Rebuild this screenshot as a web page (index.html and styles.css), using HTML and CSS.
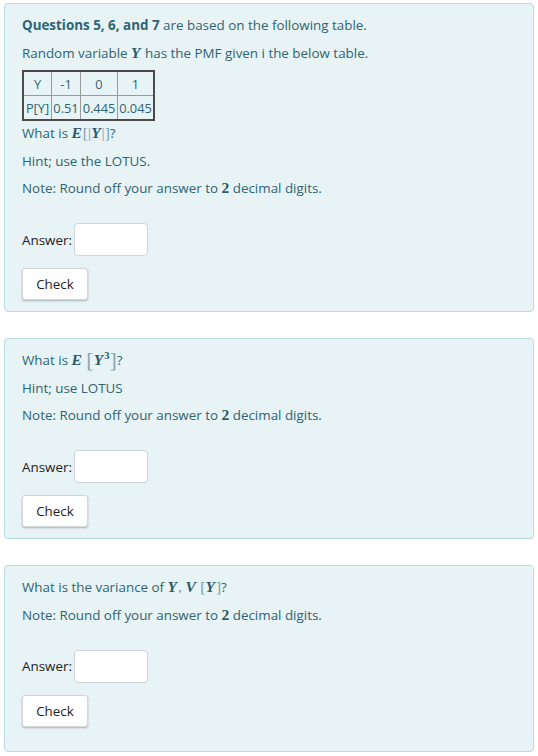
FILE: index.html
```html
<!DOCTYPE html>
<html lang="en">
<head>
<meta charset="utf-8">
<title>Questions</title>
<link rel="stylesheet" href="styles.css">
</head>
<body>
<div class="panel">
  <p><strong>Questions 5, 6, and 7</strong> are based on the following table.</p>
  <p>Random variable <span class="m mi">Y</span> has the PMF given i the below table.</p>
  <table class="pmf">
    <tr><td class="c1">Y</td><td class="c2">-1</td><td class="c3">0</td><td class="c4">1</td></tr>
    <tr><td>P[Y]</td><td>0.51</td><td>0.445</td><td>0.045</td></tr>
  </table>
  <p>What is <span class="m mi">E</span><span class="m mo">[|</span><span class="m mi">Y</span><span class="m mo">|]</span>?</p>
  <p>Hint; use the LOTUS.</p>
  <p>Note: Round off your answer to <span class="m mn">2</span> decimal digits.</p>
  <div class="answer"><label>Answer:</label><span class="input"></span></div>
  <button class="check">Check</button>
</div>

<div class="panel">
  <p>What is <span class="m mi">E</span> <span class="m big">[</span><span class="m mi">Y</span><sup class="m sup">3</sup><span class="m big">]</span>?</p>
  <p>Hint; use LOTUS</p>
  <p>Note: Round off your answer to <span class="m mn">2</span> decimal digits.</p>
  <div class="answer"><label>Answer:</label><span class="input"></span></div>
  <button class="check">Check</button>
</div>

<div class="panel panel-tall">
  <p>What is the variance of <span class="m mi">Y</span><span class="m mo">,</span> <span class="m mi">V</span> <span class="m mo">[</span><span class="m mi">Y</span><span class="m mo">]</span>?</p>
  <p>Note: Round off your answer to <span class="m mn">2</span> decimal digits.</p>
  <div class="answer"><label>Answer:</label><span class="input"></span></div>
  <button class="check">Check</button>
</div>
</body>
</html>
```

FILE: styles.css
```css
html, body {
  margin: 0;
  background: #ffffff;
}
body {
  padding: 3px 4px 0 4px;
  font-family: "Open Sans", "Noto Sans", sans-serif;
  font-size: 13.4px;
  color: #2f6473;
}
.panel {
  background: #e7f3f5;
  border: 1px solid #b8dce2;
  border-radius: 4px;
  padding: 11px 17px 11px 17px;
  margin-bottom: 26px;
}
.panel-tall {
  padding-bottom: 24px;
}
p {
  margin: 0 0 7.5px 0;
  line-height: 20px;
}
strong {
  font-weight: 700;
}
.m {
  font-family: "Liberation Serif", "DejaVu Serif", serif;
  font-size: 15.5px;
  line-height: 0;
}
.mi {
  font-style: italic;
  font-weight: 700;
  color: #2a5a68;
  padding-right: 1px;
}
.mn {
  font-weight: 700;
  color: #2a5a68;
}
.mo {
  color: #7a9ca6;
}
.big {
  font-size: 22px;
  color: #8aa8b0;
  vertical-align: -2px;
}
.sup {
  font-size: 10.5px;
  font-weight: 700;
  vertical-align: 6px;
  color: #2a5a68;
}
.pmf {
  border-collapse: collapse;
  border: 2px solid #4a4a4a;
  margin: 0 0 2px 0;
  font-size: 12.8px;
}
.pmf td {
  border: 1px solid #9a9a9a;
  height: 23px;
  padding: 0 1px;
  text-align: center;
  line-height: 14px;
}
.pmf .c1 { width: 25px; }
.pmf .c2 { width: 26px; }
.pmf .c3 { width: 34px; }
.pmf .c4 { width: 33px; }
.answer {
  display: flex;
  align-items: center;
  gap: 2px;
  margin-top: 25px;
}
.answer label {
  color: #1d2125;
}
.input {
  display: block;
  width: 72px;
  height: 31px;
  background: #ffffff;
  border: 1px solid #cfd6db;
  border-radius: 4px;
}
.check {
  display: block;
  margin-top: 12px;
  width: 66px;
  height: 32px;
  background: #ffffff;
  border: 1px solid #d3d7da;
  border-radius: 3px;
  box-shadow: 0 1px 2px rgba(0, 0, 0, 0.25);
  font-family: "Open Sans", "Noto Sans", sans-serif;
  font-size: 13.4px;
  color: #1d2125;
  padding: 0;
}
```
